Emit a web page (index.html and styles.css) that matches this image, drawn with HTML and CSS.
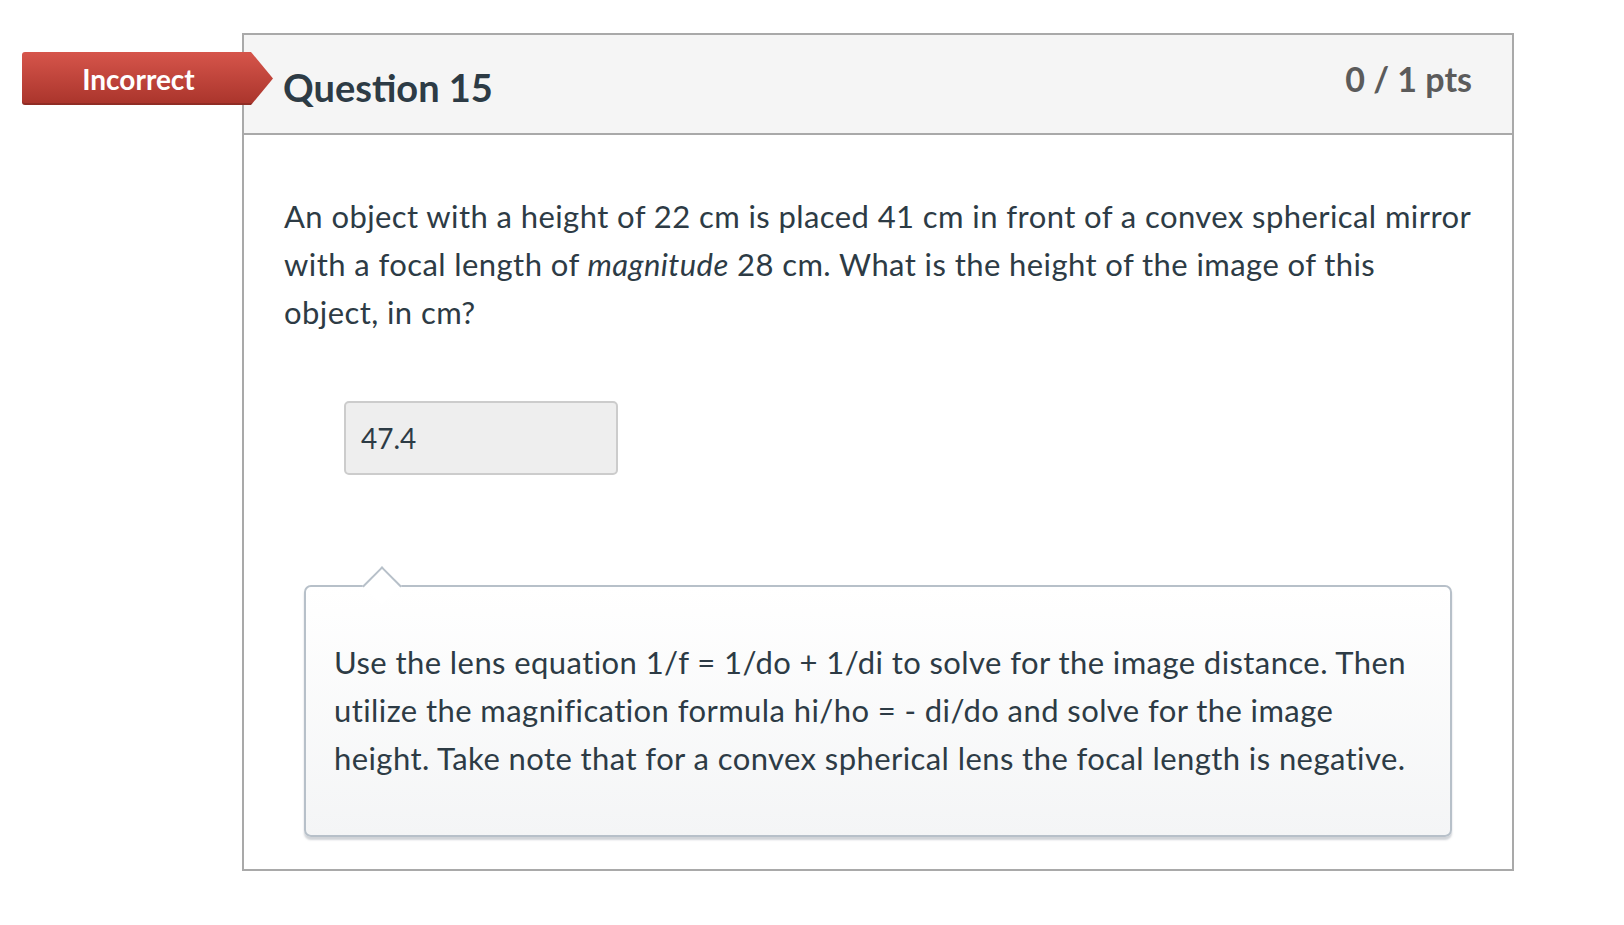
FILE: index.html
```html
<!DOCTYPE html>
<html lang="en">
<head>
<meta charset="utf-8">
<title>Question 15</title>
<link rel="stylesheet" href="styles.css">
</head>
<body>
<div class="page">
  <div class="question">
    <div class="badge">Incorrect</div>
    <div class="q-header">
      <h2 class="q-title">Question 15</h2>
      <div class="q-points">0 / 1 pts</div>
    </div>
    <div class="q-body">
      <p class="q-text">An object with a height of 22 cm is placed 41 cm in front of a convex spherical mirror with a focal length of <em>magnitude</em> 28 cm. What is the height of the image of this object, in cm?</p>
      <div class="answer">47.4</div>
      <div class="hint">
        <p>Use the lens equation 1/f = 1/do + 1/di to solve for the image distance. Then utilize the magnification formula hi/ho = - di/do and solve for the image height. Take note that for a convex spherical lens the focal length is negative.</p>
      </div>
    </div>
  </div>
</div>
</body>
</html>
```

FILE: styles.css
```css
html, body {
  margin: 0;
  padding: 0;
  background: #ffffff;
}

body {
  font-family: Lato, "Open Sans", "Liberation Sans", sans-serif;
  color: #2d3b45;
}

.page {
  padding: 33px 0 0 242px;
}

.question {
  position: relative;
  width: 1268px;
  border: 2px solid #a9a9a9;
  box-sizing: content-box;
}

.badge {
  position: absolute;
  left: -222px;
  top: 17px;
  width: 251px;
  height: 53px;
  box-sizing: border-box;
  padding-right: 18px;
  display: flex;
  align-items: center;
  justify-content: center;
  color: #ffffff;
  font-weight: 700;
  font-size: 28px;
  background: linear-gradient(#d6554b, #a9342b);
  clip-path: polygon(0 0, 229px 0, 251px 50%, 229px 100%, 0 100%);
  border-radius: 3px 0 0 3px;
  box-shadow: inset 0 -2px 0 rgba(0, 0, 0, 0.15);
}

.q-header {
  display: flex;
  justify-content: space-between;
  align-items: flex-start;
  height: 98px;
  background: #f5f5f5;
  border-bottom: 2px solid #a9a9a9;
  padding: 0 40px 0 39px;
}

.q-title {
  margin: 0;
  padding-top: 30px;
  font-size: 38px;
  font-weight: 700;
  line-height: 44px;
  color: #2d3b45;
}

.q-points {
  padding-top: 24px;
  font-size: 34px;
  font-weight: 700;
  line-height: 40px;
  color: #5b5b5b;
}

.q-body {
  padding: 57px 40px 32px 40px;
}

.q-text {
  margin: 0;
  font-size: 31px;
  letter-spacing: 0.42px;
  line-height: 48px;
  color: #2d3b45;
}

.q-text em {
  font-style: italic;
}

.answer {
  margin: 65px 0 0 60px;
  width: 274px;
  height: 74px;
  box-sizing: border-box;
  border: 2px solid #cccccc;
  border-radius: 5px;
  background: #eeeeee;
  padding: 0 0 0 15px;
  font-size: 28px;
  line-height: 70px;
  color: #2d3b45;
}

.hint {
  position: relative;
  margin: 110px 20px 0 20px;
  border: 2px solid #b7c0c9;
  border-radius: 7px;
  background: linear-gradient(#ffffff, #f4f5f6);
  padding: 51px 30px 53px 28px;
  box-shadow: 0 3px 2px rgba(120, 130, 140, 0.35);
}

.hint::before {
  content: "";
  position: absolute;
  left: 62px;
  top: -15px;
  width: 26px;
  height: 26px;
  background: #ffffff;
  border-top: 2px solid #b7c0c9;
  border-left: 2px solid #b7c0c9;
  transform: rotate(45deg);
}

.hint p {
  position: relative;
  margin: 0;
  font-size: 31px;
  letter-spacing: 0.42px;
  line-height: 48px;
  color: #2d3b45;
}
```
